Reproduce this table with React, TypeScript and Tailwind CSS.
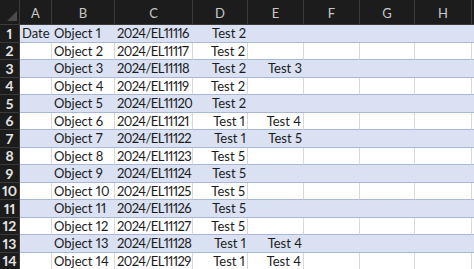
const cols = ["A", "B", "C", "D", "E", "F", "G", "H"];

const rows: string[][] = [
  ["Date", "Object 1", "2024/EL11116", "Test 2", ""],
  ["", "Object 2", "2024/EL11117", "Test 2", ""],
  ["", "Object 3", "2024/EL11118", "Test 2", "Test 3"],
  ["", "Object 4", "2024/EL11119", "Test 2", ""],
  ["", "Object 5", "2024/EL11120", "Test 2", ""],
  ["", "Object 6", "2024/EL11121", "Test 1", "Test 4"],
  ["", "Object 7", "2024/EL11122", "Test 1", "Test 5"],
  ["", "Object 8", "2024/EL11123", "Test 5", ""],
  ["", "Object 9", "2024/EL11124", "Test 5", ""],
  ["", "Object 10", "2024/EL11125", "Test 5", ""],
  ["", "Object 11", "2024/EL11126", "Test 5", ""],
  ["", "Object 12", "2024/EL11127", "Test 5", ""],
  ["", "Object 13", "2024/EL11128", "Test 1", "Test 4"],
  ["", "Object 14", "2024/EL11129", "Test 1", "Test 4"],
];

const grid =
  "grid grid-cols-[20px_32px_63px_78px_55px_56px_56px_55px_57px_1fr]";

export default function App() {
  return (
    <div
      className="w-[474px] h-[269px] overflow-hidden bg-white text-[#1b1b1b] proportional-nums"
      style={{ fontFamily: "Lato, 'Liberation Sans', sans-serif" }}
    >
      {/* column header */}
      <div className={`${grid} h-[25px] bg-[#1c1c1c]`}>
        <div className="relative border-r border-b border-[#3a3a3a]">
          <div className="absolute right-[2px] bottom-[3px] w-0 h-0 border-l-[10px] border-l-transparent border-b-[10px] border-b-[#4b4b4b]" />
        </div>
        {cols.map((c) => (
          <div
            key={c}
            className="flex items-end justify-center pb-[4px] text-[13px] leading-none text-[#c8c8c8] border-r border-b border-[#3a3a3a]"
          >
            {c}
          </div>
        ))}
        <div className="border-b border-[#3a3a3a]" />
      </div>

      {rows.map((r, i) => {
        const banded = i % 2 === 0;
        return (
          <div
            key={i}
            className={`${grid} ${i % 2 === 0 ? "h-[18px]" : "h-[17px]"} ${
              banded ? "bg-[#d9e1f2]" : "bg-white"
            }`}
          >
            <div className="flex items-center justify-center bg-[#1c1c1c] text-[14px] leading-none font-bold text-[#e4e4e4] border-r border-b border-[#3a3a3a]">
              {i + 1}
            </div>
            {[0, 1, 2, 3, 4, 5, 6, 7].map((ci) => {
              const v = r[ci] ?? "";
              const right = ci === 3 || ci === 4;
              return (
                <div
                  key={ci}
                  className={`flex items-center px-[2px] text-[13px] leading-none whitespace-nowrap overflow-hidden border-b border-b-[#a9b8d9] ${
                    right ? "justify-end" : "justify-start"
                  } ${ci === 2 ? "tracking-[-0.6px]" : ""} ${
                    banded ? "" : "border-r border-r-[#d9d9d9]"
                  }`}
                >
                  {v}
                </div>
              );
            })}
            <div className="border-b border-b-[#a9b8d9]" />
          </div>
        );
      })}
    </div>
  );
}
